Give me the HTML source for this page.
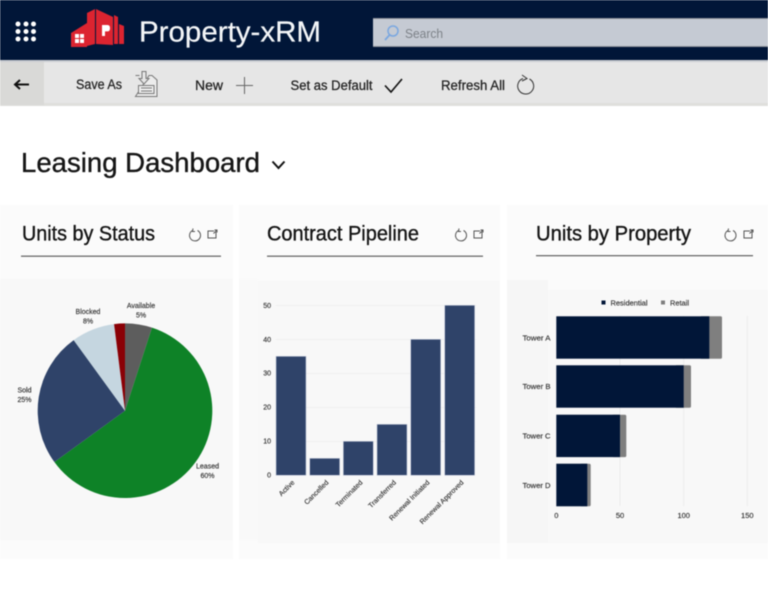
<!DOCTYPE html>
<html><head><meta charset="utf-8"><title>Leasing Dashboard</title>
<style>
html,body{margin:0;padding:0;background:#fff;width:768px;height:597px;overflow:hidden}
svg{display:block;filter:blur(.4px)}
text{font-family:"Liberation Sans",sans-serif}
.h{stroke:#111;stroke-width:.35px}
.m{stroke:#222;stroke-width:.25px}
.s{stroke:#333;stroke-width:.15px}
</style></head><body>
<svg width="768" height="597" viewBox="0 0 768 597" xmlns="http://www.w3.org/2000/svg">
<rect width="768" height="597" fill="#fff"/>
<!-- header -->
<rect width="768" height="60" fill="#011638"/>
<rect y="60" width="768" height="2" fill="#c9ccd1"/>
<rect y="62" width="768" height="41" fill="#e6e6e6"/>
<rect y="103" width="768" height="3" fill="#dfdfdc"/>
<rect y="62" width="44" height="43" fill="#d9d9d7"/>
<g fill="#fff">
<circle cx="18" cy="24" r="2.5"/><circle cx="26" cy="24" r="2.5"/><circle cx="33.500" cy="24" r="2.5"/>
<circle cx="18" cy="31.500" r="2.5"/><circle cx="26" cy="31.500" r="2.500"/><circle cx="33.500" cy="31.500" r="2.500"/>
<circle cx="18" cy="39" r="2.500"/><circle cx="26" cy="39" r="2.500"/><circle cx="33.500" cy="39" r="2.500"/>
</g>
<!-- logo -->
<g fill="#dc2430">
<path d="M71 33 87 23V47L71 47Z"/>
<path d="M87 13 95 9V44L87 46Z"/>
<path d="M96 9 113 17V45L96 44Z"/>
<path d="M114 15 118 17V44L114 44Z"/>
<path d="M119 24 124 26V44H119Z"/>
</g>
<g fill="#fff"><rect x="75" y="34" width="4" height="4"/><rect x="80" y="34" width="4" height="4"/><rect x="75" y="39" width="4" height="4"/><rect x="80" y="39" width="4" height="4"/>
<path d="M102 25h5.500q2.500 0 2.500 3.200t-2.500 3.200h-2.500V36h-3Z"/></g>
<text x="139" y="41.500" font-size="29" fill="#f4f6f8" textLength="182" lengthAdjust="spacingAndGlyphs" stroke="#f4f6f8" stroke-width=".2">Property-xRM</text>
<!-- search -->
<rect x="373" y="18" width="395" height="28" fill="#c5cad3"/>
<rect x="373" y="18" width="395" height="1" fill="#8b8f98"/><rect x="373" y="46" width="395" height="1" fill="#8b8f98"/>
<circle cx="393" cy="31" r="5" fill="none" stroke="#7aa7e0" stroke-width="1.500"/>
<path d="M389.500 35 385 40" stroke="#7aa7e0" stroke-width="1.800"/>
<text x="405" y="38" font-size="13" fill="#7d8288" textLength="38" lengthAdjust="spacingAndGlyphs">Search</text>
<!-- toolbar -->
<path d="M15 84.500H29M20 80 15 84.500 20 89" fill="none" stroke="#111" stroke-width="2"/>
<g font-size="13.500" fill="#222" class="m">
<text x="76" y="89" textLength="46" lengthAdjust="spacingAndGlyphs">Save As</text>
<text x="195" y="90" textLength="28" lengthAdjust="spacingAndGlyphs">New</text>
<text x="290.500" y="90" textLength="82" lengthAdjust="spacingAndGlyphs">Set as Default</text>
<text x="441" y="90" textLength="64" lengthAdjust="spacingAndGlyphs">Refresh All</text>
</g>
<g fill="none" stroke="#777" stroke-width="1">
<path d="M135.500 75.500h4M149 75.500h3l5 4.500v16.500h-21.500Z" fill="#ececec"/>
<path d="M142 71.500v7h-3l5 5.500 5-5.500h-3v-7Z" fill="#e6e6e6"/>
<rect x="138.500" y="85.500" width="15.500" height="8" fill="#efefef"/>
<path d="M141 88h11M141 91h11"/>
</g>
<path d="M236 85.500H253M244.500 77V94" stroke="#666" stroke-width="1" fill="none"/>
<path d="M385 85.500 391 92 402 79" stroke="#111" stroke-width="1.600" fill="none"/>
<path d="M523 78.500A8 8 0 1 0 529.500 79" stroke="#333" stroke-width="1" fill="none"/>
<path d="M522 75 527 78.500 522 81" stroke="#333" stroke-width="1" fill="none"/>
<!-- page title -->
<text x="21" y="172" font-size="27.500" fill="#161616" textLength="239" lengthAdjust="spacingAndGlyphs" class="h">Leasing Dashboard</text>
<path d="M272.500 161.500 278.500 168 284.500 161.500" fill="none" stroke="#111" stroke-width="2"/>
<!-- panels -->
<rect x="0" y="205" width="233" height="354" fill="#fbfbfb"/>
<rect x="239" y="205" width="261" height="354" fill="#fbfbfb"/>
<rect x="507" y="205" width="261" height="354" fill="#fbfbfb"/>
<rect x="0" y="279" width="233" height="261" fill="#f8f8f8"/>
<rect x="239" y="279" width="19" height="261" fill="#f9f9f9"/>
<rect x="258" y="281" width="242" height="262" fill="#f8f8f8"/>
<rect x="507" y="290" width="261" height="253" fill="#f8f8f8"/>
<rect x="507" y="280" width="41" height="263" fill="#f6f6f6"/>
<!-- panel titles -->
<g font-size="21" fill="#141414" class="h">
<text x="22" y="240.500" textLength="133" lengthAdjust="spacingAndGlyphs">Units by Status</text>
<text x="267" y="240.500" textLength="152" lengthAdjust="spacingAndGlyphs">Contract Pipeline</text>
<text x="536" y="240.500" textLength="155" lengthAdjust="spacingAndGlyphs">Units by Property</text>
</g>
<g stroke="#555" stroke-width="1.100">
<path d="M21 256.200H221"/><path d="M267 256.200H483"/><path d="M536 255.700H753"/>
</g>
<g fill="none" stroke="#555" stroke-width="1">
<path d="M193 230.300A5.500 5.500 0 1 0 197.500 230.500M193 228.500 192.500 231.500 195 231.500"/>
<path d="M216 232v6h-8v-7h6M213.500 233.500 217 230M214.500 230H217V232.500"/>
<path d="M459 230.300A5.500 5.500 0 1 0 463.500 230.500M459 228.500 458.500 231.500 461 231.500"/>
<path d="M482 232v6h-8v-7h6M479.500 233.500 483 230M480.500 230H483V232.500"/>
<path d="M728.500 230.300A5.500 5.500 0 1 0 733 230.500M728.500 228.500 728 231.500 730.500 231.500"/>
<path d="M752 232v6h-8v-7h6M749.500 233.500 753 230M750.500 230H753V232.500"/>
</g>
<!-- pie -->
<path d="M125 410.700 125 323.400A87.300 87.300 0 0 1 151.980 327.670Z" fill="#5d5d5d"/>
<path d="M125 410.700 151.980 327.670A87.300 87.300 0 1 1 54.370 462.010Z" fill="#0e8227"/>
<path d="M125 410.700 54.370 462.010A87.300 87.300 0 0 1 73.690 340.070Z" fill="#2f4369"/>
<path d="M125 410.700 73.690 340.070A87.300 87.300 0 0 1 114.060 324.090Z" fill="#c5d6e0"/>
<path d="M125 410.700 114.060 324.090A87.300 87.300 0 0 1 125 323.400Z" fill="#8a0006"/>
<g font-size="7" fill="#333" text-anchor="middle" class="s">
<text x="141" y="308">Available</text><text x="141" y="317.500">5%</text>
<text x="88" y="314">Blocked</text><text x="88" y="323.500">8%</text>
<text x="24.500" y="392.500">Sold</text><text x="24.500" y="402">25%</text>
<text x="207.500" y="468.500">Leased</text><text x="207.500" y="478">60%</text>
</g>
<!-- column chart -->
<g stroke="#f0f0f0" stroke-width="1"><path d="M276 305.500H476M276 339.500H476M276 373.500H476M276 407.500H476M276 441.500H476"/></g>
<g fill="#2f4369" stroke="#c4cada" stroke-width=".6">
<rect x="276" y="356.300" width="30" height="119"/>
<rect x="309.700" y="458.300" width="30" height="17"/>
<rect x="343.300" y="441.300" width="30" height="34"/>
<rect x="377" y="424.300" width="30" height="51"/>
<rect x="410.700" y="339.300" width="30" height="136"/>
<rect x="444.700" y="305.300" width="30" height="170"/>
</g>
<g font-size="7" fill="#333" text-anchor="end" class="s">
<text x="271" y="308">50</text><text x="271" y="342">40</text><text x="271" y="375.500">30</text><text x="271" y="409.500">20</text><text x="271" y="443.500">10</text><text x="271" y="477.500">0</text>
</g>
<g font-size="7" fill="#333" text-anchor="end" class="s">
<text transform="translate(295 483) rotate(-45)">Active</text>
<text transform="translate(329 483) rotate(-45)">Cancelled</text>
<text transform="translate(363 483) rotate(-45)">Terminated</text>
<text transform="translate(396.500 483) rotate(-45)">Transferred</text>
<text transform="translate(430 483) rotate(-45)">Renewal Initiated</text>
<text transform="translate(464 483) rotate(-45)">Renewal Approved</text>
</g>
<!-- stacked bars -->
<g stroke="#ececec" stroke-width="1"><path d="M620 316V506M683.700 316V506M747.300 316V506"/></g>
<rect x="601.500" y="300.500" width="4" height="4" fill="#011638"/>
<rect x="661" y="300.500" width="4" height="4" fill="#7f7f7f"/>
<g font-size="7.500" fill="#333" class="s">
<text x="610.500" y="305.300" textLength="37" lengthAdjust="spacingAndGlyphs">Residential</text>
<text x="670" y="305.300" textLength="19" lengthAdjust="spacingAndGlyphs">Retail</text>
</g>
<g fill="#7f7f7f">
<rect x="700" y="316.300" width="22" height="42.400" rx="1.500"/>
<rect x="675" y="365.300" width="16" height="42.400" rx="1.500"/>
<rect x="612" y="414.700" width="14.300" height="42.400" rx="1.500"/>
<rect x="580" y="463.700" width="10.700" height="42.600" rx="1.500"/>
</g>
<g fill="#011638">
<rect x="556.300" y="316.300" width="153" height="42.400"/>
<rect x="556.300" y="365.300" width="127.400" height="42.400"/>
<rect x="556.300" y="414.700" width="63.700" height="42.400"/>
<rect x="556.300" y="463.700" width="31" height="42.600"/>
</g>
<g font-size="7.500" fill="#333" text-anchor="end" class="s">
<text x="550.500" y="340.500" textLength="28" lengthAdjust="spacingAndGlyphs">Tower A</text><text x="550.500" y="389" textLength="28" lengthAdjust="spacingAndGlyphs">Tower B</text><text x="550.500" y="438.500" textLength="28" lengthAdjust="spacingAndGlyphs">Tower C</text><text x="550.500" y="488" textLength="28" lengthAdjust="spacingAndGlyphs">Tower D</text>
</g>
<g font-size="7.500" fill="#333" text-anchor="middle" class="s">
<text x="556.300" y="518">0</text><text x="620" y="518">50</text><text x="683.700" y="518">100</text><text x="747.300" y="518">150</text>
</g>
</svg>
</body></html>
